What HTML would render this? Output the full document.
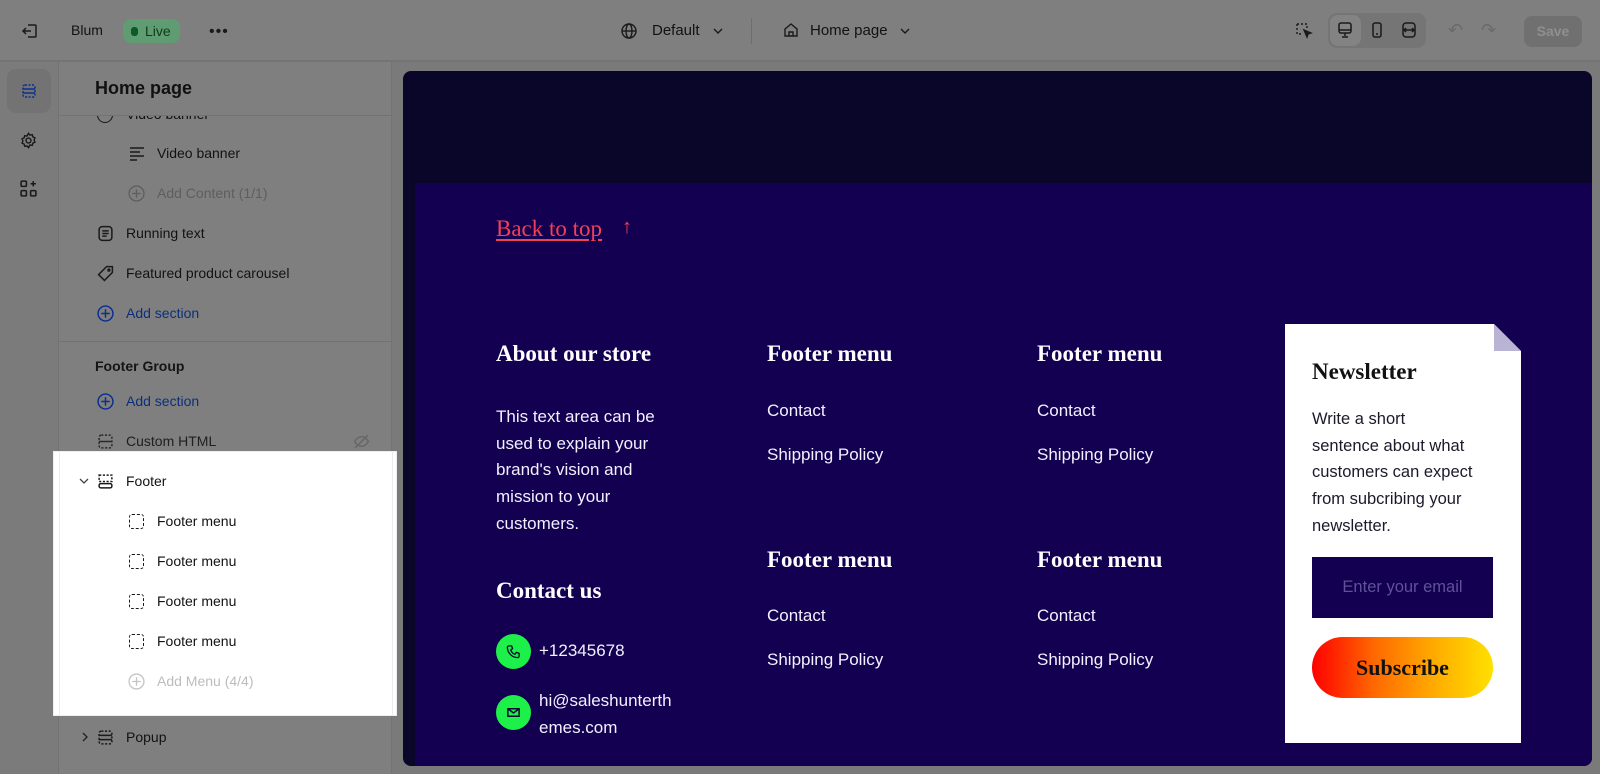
<!DOCTYPE html>
<html><head><meta charset="utf-8"><style>
*{margin:0;padding:0;box-sizing:border-box}
body{width:1600px;height:774px;overflow:hidden;background:#7a7a7a;font-family:"Liberation Sans",sans-serif;position:relative;color:#111}
.a{position:absolute;white-space:nowrap}
.serif{font-family:"Liberation Serif",serif;font-weight:bold}
.topbar{position:absolute;left:0;top:0;width:1600px;height:62px;background:#7f7f7f;border-bottom:2px solid #747474}
.rail{position:absolute;left:0;top:62px;width:59px;height:712px;background:#7b7b7b;border-right:1px solid #727272}
.panel{position:absolute;left:59px;top:62px;width:333px;height:712px;background:#7f7f7f;border-right:1px solid #747474}
.t14{font-size:14px;color:#121212}
.blue{color:#0b2f7d;font-size:14px}
.dim{color:#5e5e5e;font-size:14px}
.frame{position:absolute;left:403px;top:71px;width:1189px;height:695px;background:#0a0629;border-radius:8px;overflow:hidden}
.foot{position:absolute;left:12px;top:112px;width:1177px;height:583px;background:#140050}
.w{color:#fff}
.h{font-size:23px}
.b{font-size:17px;color:#f2f0ff}
</style></head><body>
<div class="topbar"></div>
<svg class="a" style="left:20px;top:21px" width="20" height="20" viewBox="0 0 20 20" fill="none" stroke="#1a1a1a" stroke-width="1.5"><path d="M8 4h7a1 1 0 0 1 1 1v10a1 1 0 0 1-1 1H8"/><path d="M11 10H3M6 7l-3 3 3 3"/></svg>
<div class="a t14" style="left:71px;top:22px">Blum</div>
<div class="a" style="left:123px;top:19px;width:57px;height:24px;border-radius:8px;background:#5f9c71"></div>
<div class="a" style="left:131px;top:27px;width:7px;height:9px;border-radius:3px;background:#0b5a28"></div>
<div class="a t14" style="left:145px;top:23px;color:#0e3a1c">Live</div>
<div class="a" style="left:209px;top:23px;font-size:16px;letter-spacing:1px;color:#1a1a1a">•••</div>
<svg class="a" style="left:620px;top:22px" width="18" height="18" viewBox="0 0 18 18" fill="none" stroke="#1a1a1a" stroke-width="1.4"><circle cx="9" cy="9" r="7"/><ellipse cx="9" cy="9" rx="3" ry="7"/><path d="M2 9h14"/></svg>
<div class="a t14" style="left:652px;top:22px;font-size:15px">Default</div>
<svg class="a" style="left:712px;top:27px" width="12" height="8" viewBox="0 0 12 8" fill="none" stroke="#1a1a1a" stroke-width="1.4"><path d="M2 2l4 4 4-4"/></svg>
<div class="a" style="left:751px;top:18px;width:1px;height:26px;background:#6e6e6e"></div>
<svg class="a" style="left:782px;top:21px" width="18" height="18" viewBox="0 0 18 18" fill="none" stroke="#1a1a1a" stroke-width="1.4"><path d="M3 8l6-5 6 5v7H3z"/><path d="M7 15v-4h4v4"/></svg>
<div class="a t14" style="left:810px;top:22px;font-size:15px">Home page</div>
<svg class="a" style="left:899px;top:27px" width="12" height="8" viewBox="0 0 12 8" fill="none" stroke="#1a1a1a" stroke-width="1.4"><path d="M2 2l4 4 4-4"/></svg>
<svg class="a" style="left:1295px;top:22px" width="18" height="18" viewBox="0 0 18 18" fill="none" stroke="#1a1a1a" stroke-width="1.4"><path d="M2 2h10v4M2 2v10h4" stroke-dasharray="2 2"/><path d="M9 8l7 3-3 1-1 3z" fill="#1a1a1a"/></svg>
<div class="a" style="left:1328px;top:13px;width:98px;height:35px;border-radius:9px;background:#757575"></div>
<div class="a" style="left:1330px;top:15px;width:31px;height:31px;border-radius:8px;background:#838383"></div>
<svg class="a" style="left:1336px;top:21px" width="18" height="18" viewBox="0 0 18 18" fill="none" stroke="#1a1a1a" stroke-width="1.5"><rect x="3" y="2" width="12" height="10" rx="2"/><path d="M3 9h12M9 12v3M6 16h6"/></svg>
<svg class="a" style="left:1368px;top:21px" width="18" height="18" viewBox="0 0 18 18" fill="none" stroke="#1a1a1a" stroke-width="1.5"><rect x="5" y="2" width="8" height="14" rx="2"/><path d="M8 13h2"/></svg>
<svg class="a" style="left:1400px;top:21px" width="18" height="18" viewBox="0 0 18 18" fill="none" stroke="#1a1a1a" stroke-width="1.5"><rect x="3" y="2" width="12" height="14" rx="3"/><path d="M3 9h12M6 7l-2 2 2 2M12 7l2 2-2 2"/></svg>
<div class="a" style="left:1448px;top:20px;color:#6a6a6a;font-size:18px">↶</div>
<div class="a" style="left:1481px;top:20px;color:#6a6a6a;font-size:18px">↷</div>
<div class="a" style="left:1524px;top:16px;width:58px;height:31px;border-radius:8px;background:#707070;color:#8f8f8f;font-size:14px;font-weight:bold;text-align:center;line-height:31px">Save</div>

<div class="rail"></div>
<div class="a" style="left:7px;top:69px;width:44px;height:44px;border-radius:9px;background:#737373"></div>
<svg class="a" style="left:20px;top:82px" width="18" height="18" viewBox="0 0 18 18" fill="none" stroke="#0b2f8d" stroke-width="1.5"><rect x="3" y="3" width="12" height="12" rx="2" stroke-dasharray="2 1.5"/><path d="M3 7h12M3 11h12"/></svg>
<svg class="a" style="left:19px;top:131px" width="19" height="19" viewBox="0 0 20 20" fill="none" stroke="#1a1a1a" stroke-width="1.5"><circle cx="10" cy="10" r="2.6"/><path d="M10 2.5l1.6 1.8 2.4-.4.6 2.3 2.2 1-.9 2.3.9 2.3-2.2 1-.6 2.3-2.4-.4L10 17.5l-1.6-1.8-2.4.4-.6-2.3-2.2-1 .9-2.3-.9-2.3 2.2-1 .6-2.3 2.4.4z"/></svg>
<svg class="a" style="left:19px;top:179px" width="19" height="19" viewBox="0 0 18 18" fill="none" stroke="#1a1a1a" stroke-width="1.5"><rect x="2" y="2" width="5" height="5" rx="1"/><rect x="2" y="11" width="5" height="5" rx="1"/><rect x="11" y="11" width="5" height="5" rx="1"/><path d="M13.5 2v5M11 4.5h5"/></svg>

<div class="panel"></div>
<div class="a" style="left:59px;top:116px;width:333px;height:8px;overflow:hidden">
 <div class="a t14" style="left:67px;top:-10px">Video banner</div>
 <div class="a" style="left:38px;top:-9px;width:16px;height:16px;border:1.4px solid #1a1a1a;border-radius:50%"></div>
</div>
<div class="a" style="left:95px;top:78px;font-size:18px;font-weight:bold;color:#111">Home page</div>
<div class="a" style="left:59px;top:115px;width:333px;height:1px;background:#727272"></div>
<svg class="a" style="left:129px;top:145px" width="16" height="16" viewBox="0 0 16 16" stroke="#1a1a1a" stroke-width="1.4"><path d="M1 3h14M1 7h10M1 11h14M1 15h7"/></svg>
<div class="a t14" style="left:157px;top:145px">Video banner</div>
<svg class="a" style="left:128px;top:185px" width="17" height="17" viewBox="0 0 16 16" fill="none" stroke="#5e5e5e" stroke-width="1.2"><circle cx="8" cy="8" r="7"/><path d="M8 4v8M4 8h8"/></svg>
<div class="a dim" style="left:157px;top:185px">Add Content (1/1)</div>
<svg class="a" style="left:97px;top:225px" width="17" height="17" viewBox="0 0 16 16" fill="none" stroke="#1a1a1a" stroke-width="1.4"><rect x="2" y="1.5" width="12" height="13" rx="3"/><path d="M5 5.5h6M5 8h6M5 10.5h4"/></svg>
<div class="a t14" style="left:126px;top:225px">Running text</div>
<svg class="a" style="left:97px;top:265px" width="17" height="17" viewBox="0 0 16 16" fill="none" stroke="#1a1a1a" stroke-width="1.4"><path d="M9 1.5h5.5V7L7 14.5 1.5 9z"/><circle cx="11.2" cy="4.8" r=".9"/></svg>
<div class="a t14" style="left:126px;top:265px">Featured product carousel</div>
<svg class="a" style="left:97px;top:305px" width="17" height="17" viewBox="0 0 16 16" fill="none" stroke="#0b2f8d" stroke-width="1.4"><circle cx="8" cy="8" r="7"/><path d="M8 4v8M4 8h8"/></svg>
<div class="a blue" style="left:126px;top:305px">Add section</div>
<div class="a" style="left:59px;top:341px;width:333px;height:1px;background:#727272"></div>
<div class="a t14" style="left:95px;top:358px;font-weight:bold;color:#151515">Footer Group</div>
<svg class="a" style="left:97px;top:393px" width="17" height="17" viewBox="0 0 16 16" fill="none" stroke="#0b2f8d" stroke-width="1.4"><circle cx="8" cy="8" r="7"/><path d="M8 4v8M4 8h8"/></svg>
<div class="a blue" style="left:126px;top:393px">Add section</div>
<svg class="a" style="left:97px;top:433px" width="17" height="17" viewBox="0 0 16 16" fill="none" stroke="#2a2a2a" stroke-width="1.4"><rect x="2" y="2" width="12" height="12" rx="2" stroke-dasharray="2 1.5"/><path d="M2 8h12"/></svg>
<div class="a t14" style="left:126px;top:433px;color:#202020">Custom HTML</div>
<svg class="a" style="left:353px;top:433px" width="17" height="17" viewBox="0 0 16 16" fill="none" stroke="#666" stroke-width="1.3"><path d="M1.5 8s2.5-4.5 6.5-4.5S14.5 8 14.5 8 12 12.5 8 12.5 1.5 8 1.5 8z"/><path d="M2 14L14 2"/></svg>

<div class="a" style="left:53px;top:451px;width:344px;height:265px;background:#fff;border:1px solid #eee"></div>
<div class="a" style="left:59px;top:451px;width:1px;height:265px;background:#ececec"></div>
<div class="a" style="left:392px;top:451px;width:1px;height:265px;background:#ececec"></div>
<svg class="a" style="left:78px;top:476px" width="12" height="10" viewBox="0 0 12 10" fill="none" stroke="#444" stroke-width="1.3"><path d="M2 3l4 4 4-4"/></svg>
<svg class="a" style="left:97px;top:473px" width="17" height="17" viewBox="0 0 16 16" fill="none" stroke="#1a1a1a" stroke-width="1.4"><path d="M2 2h12v6H2z" stroke-dasharray="2 1.5"/><rect x="2" y="10" width="12" height="4" rx="1.5"/></svg>
<div class="a t14" style="left:126px;top:473px">Footer</div>
<div class="a" style="left:129px;top:514px;width:15px;height:15px;border:1.5px dashed #1a1a1a;border-radius:3px"></div>
<div class="a t14" style="left:157px;top:513px">Footer menu</div>
<div class="a" style="left:129px;top:554px;width:15px;height:15px;border:1.5px dashed #1a1a1a;border-radius:3px"></div>
<div class="a t14" style="left:157px;top:553px">Footer menu</div>
<div class="a" style="left:129px;top:594px;width:15px;height:15px;border:1.5px dashed #1a1a1a;border-radius:3px"></div>
<div class="a t14" style="left:157px;top:593px">Footer menu</div>
<div class="a" style="left:129px;top:634px;width:15px;height:15px;border:1.5px dashed #1a1a1a;border-radius:3px"></div>
<div class="a t14" style="left:157px;top:633px">Footer menu</div>
<svg class="a" style="left:128px;top:673px" width="17" height="17" viewBox="0 0 16 16" fill="none" stroke="#c4c4c4" stroke-width="1.2"><circle cx="8" cy="8" r="7"/><path d="M8 4v8M4 8h8"/></svg>
<div class="a" style="left:157px;top:673px;font-size:14px;color:#bcbcbc">Add Menu (4/4)</div>

<svg class="a" style="left:80px;top:731px" width="10" height="12" viewBox="0 0 10 12" fill="none" stroke="#222" stroke-width="1.3"><path d="M3 2l4 4-4 4"/></svg>
<svg class="a" style="left:97px;top:729px" width="17" height="17" viewBox="0 0 16 16" fill="none" stroke="#1a1a1a" stroke-width="1.4"><rect x="2" y="2" width="12" height="12" rx="2" stroke-dasharray="2 1.5"/><path d="M2 6h12M2 10h12"/></svg>
<div class="a t14" style="left:126px;top:729px">Popup</div>

<div class="frame">
 <div class="foot">
  <div class="a serif" style="left:81px;top:33px;font-size:23px;font-weight:normal;color:#f0405a;text-decoration:underline;text-decoration-thickness:2px;text-underline-offset:3px">Back to top</div>
  <div class="a" style="left:207px;top:33px;font-size:20px;color:#f0405a">↑</div>

  <div class="a serif w h" style="left:81px;top:158px">About our store</div>
  <div class="a b" style="left:81px;top:221px;line-height:26.7px;white-space:normal;width:185px">This text area can be used to explain your brand's vision and mission to your customers.</div>
  <div class="a serif w h" style="left:81px;top:395px">Contact us</div>
  <div class="a" style="left:81px;top:451px;width:35px;height:35px;border-radius:50%;background:#1ef04a"></div>
  <svg class="a" style="left:91px;top:461px" width="15" height="15" viewBox="0 0 16 16" fill="none" stroke="#0a0a30" stroke-width="1.4"><path d="M3 2l3 0 1 3-2 1.5a8 8 0 0 0 4.5 4.5L11 9l3 1v3a1.5 1.5 0 0 1-1.5 1.5A11 11 0 0 1 1.5 3.5 1.5 1.5 0 0 1 3 2z"/></svg>
  <div class="a b" style="left:124px;top:458px">+12345678</div>
  <div class="a" style="left:81px;top:512px;width:35px;height:35px;border-radius:50%;background:#1ef04a"></div>
  <svg class="a" style="left:91px;top:522px" width="15" height="15" viewBox="0 0 16 16" fill="none" stroke="#0a0a30" stroke-width="1.6"><rect x="2" y="4" width="12" height="8"/><path d="M2 4l6 4.5L14 4"/></svg>
  <div class="a b" style="left:124px;top:504px;line-height:27px">hi@saleshunterth<br>emes.com</div>

  <div class="a serif w h" style="left:352px;top:158px">Footer menu</div>
  <div class="a b" style="left:352px;top:218px">Contact</div>
  <div class="a b" style="left:352px;top:262px">Shipping Policy</div>
  <div class="a serif w h" style="left:352px;top:364px">Footer menu</div>
  <div class="a b" style="left:352px;top:423px">Contact</div>
  <div class="a b" style="left:352px;top:467px">Shipping Policy</div>

  <div class="a serif w h" style="left:622px;top:158px">Footer menu</div>
  <div class="a b" style="left:622px;top:218px">Contact</div>
  <div class="a b" style="left:622px;top:262px">Shipping Policy</div>
  <div class="a serif w h" style="left:622px;top:364px">Footer menu</div>
  <div class="a b" style="left:622px;top:423px">Contact</div>
  <div class="a b" style="left:622px;top:467px">Shipping Policy</div>

  <div class="a" style="left:870px;top:141px;width:236px;height:419px;background:#fff;clip-path:polygon(0 0,209px 0,236px 27px,236px 100%,0 100%)"></div>
  <div class="a" style="left:1079px;top:141px;width:27px;height:27px;background:#b9b3d6;clip-path:polygon(0 0,100% 100%,0 100%)"></div>
  <div class="a serif h" style="left:897px;top:176px;color:#111">Newsletter</div>
  <div class="a" style="left:897px;top:223px;font-size:16.5px;line-height:26.7px;color:#1a1a2a">Write a short<br>sentence about what<br>customers can expect<br>from subcribing your<br>newsletter.</div>
  <div class="a" style="left:897px;top:374px;width:181px;height:61px;background:#140050;color:#5f519a;font-size:16.5px;line-height:61px;text-align:center">Enter your email</div>
  <div class="a serif" style="left:897px;top:454px;width:181px;height:61px;border-radius:31px;background:linear-gradient(90deg,#ff0000,#ff6a00 35%,#ffb000 70%,#ffe000);color:#111;font-size:22px;line-height:61px;text-align:center">Subscribe</div>
 </div>
</div>
</body></html>
